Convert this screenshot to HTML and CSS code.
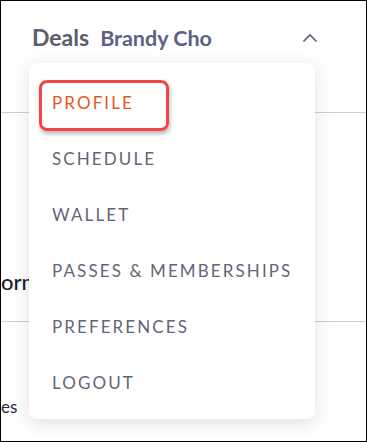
FILE: index.html
```html
<!DOCTYPE html>
<html>
<head>
<meta charset="utf-8">
<link rel="stylesheet" href="styles.css">
</head>
<body>
<div class="frame">
  <header class="header">
    <span class="deals">Deals</span>
    <span class="user">Brandy Cho</span>
    <svg class="chev" width="16" height="10" viewBox="0 0 16 10"><path d="M1.5 8.5 L8 2 L14.5 8.5" fill="none" stroke="#5a6072" stroke-width="1.6"/></svg>
  </header>
  <div class="section">
    <div class="title">orm</div>
  </div>
  <div class="section2">
    <div class="sub">es</div>
  </div>
  <nav class="menu">
    <a class="item active">PROFILE</a>
    <a class="item">SCHEDULE</a>
    <a class="item">WALLET</a>
    <a class="item">PASSES &amp; MEMBERSHIPS</a>
    <a class="item">PREFERENCES</a>
    <a class="item">LOGOUT</a>
    <div class="mark"></div>
  </nav>
</div>
</body>
</html>
```
FILE: styles.css
```css
html, body { margin: 0; padding: 0; background: #fff; }
.frame {
  width: 367px; height: 442px; box-sizing: border-box;
  border: 1px solid #000; position: relative; overflow: hidden;
  font-family: Lato, "Open Sans", sans-serif;
}
.header {
  display: flex; align-items: baseline;
  height: 112px; box-sizing: border-box;
  padding: 22px 0 0 31px;
  border-bottom: 1px solid #cfcfcf;
}
.deals { font-size: 23px; line-height: 28px; font-weight: 700; color: #5a5e6c; }
.user { font-size: 21.5px; line-height: 28px; font-weight: 700; color: #5d6284; margin-left: 11px; }
.chev { margin-left: auto; margin-right: 48px; align-self: flex-start; margin-top: 10px; }
.section {
  height: 209px; box-sizing: border-box; padding-top: 155px;
  border-bottom: 1px solid #cfcfcf;
}
.title { font-size: 22px; line-height: 27px; font-weight: 500; color: #1c1c28; }
.section2 { padding-top: 74px; }
.sub { font-size: 17px; line-height: 22px; color: #1f2c4c; }
.menu {
  position: absolute; left: 28px; top: 62px; width: 286px; height: 356px;
  box-sizing: border-box; padding: 12px 0 8px;
  background: #fff; border-radius: 7px;
  box-shadow: 0 4px 18px rgba(0,0,0,0.13);
  display: flex; flex-direction: column;
}
.item {
  display: block; height: 56px; line-height: 56px;
  padding-left: 23px; font-size: 17px; letter-spacing: 2.1px;
  color: #626677; font-weight: 400;
}
.item.active { color: #e8561f; }
.mark {
  position: absolute; left: 10px; top: 17px; width: 130px; height: 51px;
  box-sizing: border-box; border: 3px solid #f04646; border-radius: 8px;
  box-shadow: 1px 3px 4px rgba(0,0,0,0.28);
}
```
